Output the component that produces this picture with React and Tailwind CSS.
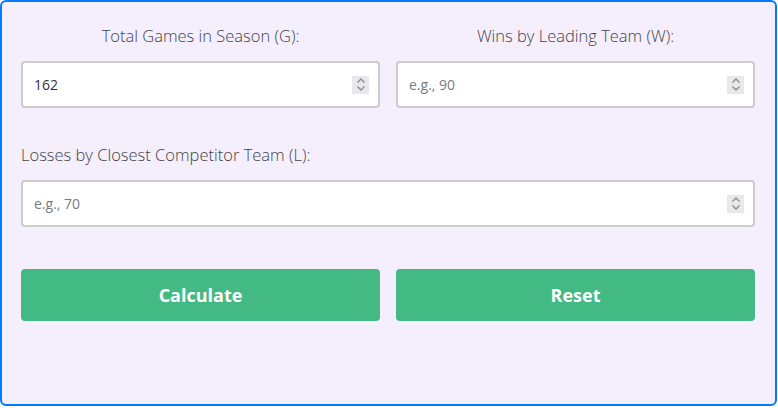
function Spinner() {
  return (
    <div className="pointer-events-none absolute right-[11px] top-1/2 flex h-[18px] w-[17px] -translate-y-1/2 flex-col items-center justify-center bg-[#e8e8ec]">
      <svg width="10" height="15" viewBox="0 0 10 15" fill="none" stroke="#8a8a8f" strokeWidth="1.3">
        <path d="M1.5 5.5 L5 2 L8.5 5.5" />
        <path d="M1.5 9.5 L5 13 L8.5 9.5" />
      </svg>
    </div>
  );
}

function NumberField({ value, placeholder }) {
  return (
    <div className="relative">
      <input
        type="number"
        defaultValue={value}
        placeholder={placeholder}
        className="h-[47px] w-full rounded border-2 border-[#ccc] bg-white px-[11px] text-[14px] text-[#333] outline-none [appearance:textfield] placeholder:text-[#7a7a80] [&::-webkit-inner-spin-button]:appearance-none [&::-webkit-outer-spin-button]:appearance-none"
      />
      <Spinner />
    </div>
  );
}

export default function App() {
  return (
    <div className="w-[777px] h-[406px] rounded-md border-2 border-[#007bff] bg-[#f4eefd] pl-[19px] pr-[20px] pt-[22px] font-['Open_Sans',sans-serif] text-[#444]">
      <div className="grid grid-cols-2 gap-x-4">
        <div className="flex flex-col">
          <label className="mb-[13px] text-center text-[16.5px] font-light leading-6">Total Games in Season (G):</label>
          <NumberField value="162" />
        </div>
        <div className="flex flex-col">
          <label className="mb-[13px] text-center text-[16.5px] font-light leading-6">Wins by Leading Team (W):</label>
          <NumberField placeholder="e.g., 90" />
        </div>
      </div>
      <div className="mt-[35px] flex flex-col">
        <label className="mb-[13px] text-[16.5px] font-light leading-6">Losses by Closest Competitor Team (L):</label>
        <NumberField placeholder="e.g., 70" />
      </div>
      <div className="mt-[42px] grid grid-cols-2 gap-x-4">
        <button className="h-[52px] rounded bg-[#43b983] text-[18px] font-bold text-white">Calculate</button>
        <button className="h-[52px] rounded bg-[#43b983] text-[18px] font-bold text-white">Reset</button>
      </div>
    </div>
  );
}
